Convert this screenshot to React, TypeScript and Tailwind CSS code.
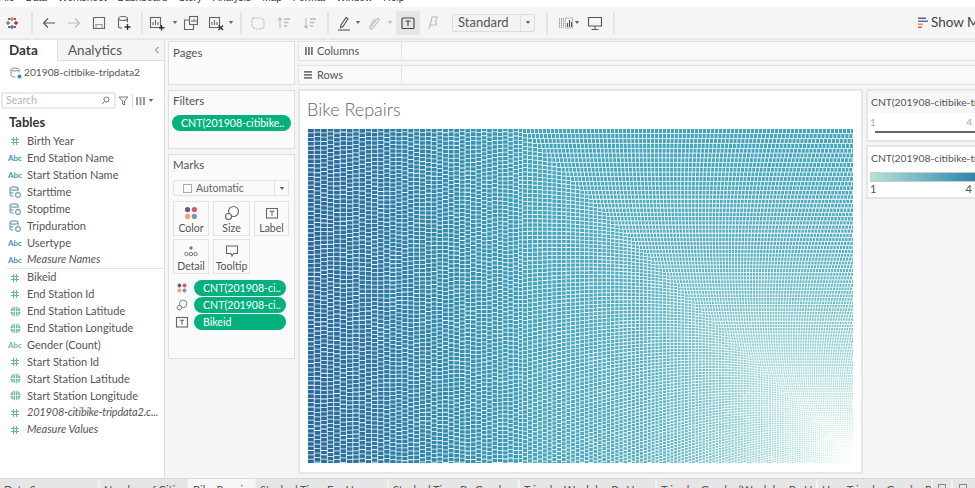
import React, { useMemo } from "react";

type Ic = { children: React.ReactNode; w?: number; h?: number };
const S = ({ children, w = 16, h = 16 }: Ic) => (
  <svg width={w} height={h} viewBox={`0 0 ${w} ${h}`} fill="none" stroke="#666" strokeWidth="1.1">
    {children}
  </svg>
);

const Caret = ({ cls = "" }: { cls?: string }) => (
  <div className={`w-[6px] h-[3px] shrink-0 flex justify-center ${cls}`}>
    <svg width="6" height="3" viewBox="0 0 6 3"><path d="M0.8 0h4.4L3 3z" fill="#666" /></svg>
  </div>
);
const Sep = ({ cls }: { cls: string }) => <div className={`w-[2px] h-[22px] bg-[#e4e4e4] shrink-0 ${cls}`} />;
const Slot = ({ cls, children }: { cls: string; children: React.ReactNode }) => (
  <div className={`h-6 flex items-center justify-center shrink-0 ${cls}`}>{children}</div>
);

const Logo = () => (
  <svg width="14" height="14" viewBox="0 0 14 14" strokeWidth="1.3">
    <path d="M7 1v4M5 3h4" stroke="#e8762d" />
    <path d="M7 9v4M5 11h4" stroke="#5b6591" />
    <path d="M1 7h4M3 5v4" stroke="#59879b" />
    <path d="M9 7h4M11 5v4" stroke="#c72035" />
    <path d="M3 3h2M4 2v2M9 3h2M10 2v2M3 11h2M4 10v2M9 11h2M10 10v2" stroke="#1f447e" strokeWidth="1" />
  </svg>
);
const ChartBox = ({ plus, x }: { plus?: boolean; x?: boolean }) => (
  <S>
    <rect x="1.5" y="2.5" width="10" height="10" />
    <path d="M4 10V7M6.5 10V5M9 10V7" />
    {plus && <path d="M12.5 10v5.5M10 12.8h5.5" stroke="#333" strokeWidth="1.4" />}
    {x && <path d="M10.5 10.5l4.5 4.5M15 10.5l-4.5 4.5" stroke="#333" strokeWidth="1.4" />}
  </S>
);
const SortIcon = ({ down }: { down?: boolean }) => (
  <S>
    <path d={down ? "M4 3v10M2 10.5L4 13l2-2.5" : "M4 13V3M2 5.5L4 3l2 2.5"} stroke="#bbb" />
    <path d="M8 4h6M8 7.5h4.5M8 11h3" stroke="#bbb" strokeWidth="1.6" />
  </S>
);
const Dots = () => (
  <svg width="14" height="14" viewBox="0 0 14 14">
    <circle cx="3.6" cy="3.6" r="2.6" fill="#6d5a8c" />
    <circle cx="10.4" cy="3.6" r="2.6" fill="#d8566c" />
    <circle cx="3.6" cy="10.4" r="2.6" fill="#f2a273" />
    <circle cx="10.4" cy="10.4" r="2.6" fill="#7e93b5" />
  </svg>
);
const SizeIc = () => (
  <S>
    <circle cx="9.5" cy="6.5" r="5" />
    <circle cx="4.5" cy="11.5" r="3" fill="#fafafa" />
  </S>
);
const TBox = () => (
  <S w={14} h={14}>
    <rect x="1.5" y="2.5" width="11" height="9.5" />
    <path d="M4.8 5.2h4.4M7 5.2v4.6" />
  </S>
);

const Hash = ({ c = "#6bb89c" }: { c?: string }) => (
  <svg width="10" height="10" viewBox="0 0 10 10" stroke={c} strokeWidth="1.2" fill="none">
    <path d="M3.5 1v8M6.5 1v8M1 3.5h8M1 6.5h8" />
  </svg>
);
const Globe = () => (
  <svg width="11" height="11" viewBox="0 0 11 11">
    <circle cx="5.5" cy="5.5" r="5" fill="#72bd9f" />
    <path d="M0.5 5.5h10M5.5 .5v10" stroke="#fff" strokeWidth=".8" />
    <ellipse cx="5.5" cy="5.5" rx="2.4" ry="5" fill="none" stroke="#fff" strokeWidth=".7" />
  </svg>
);
const Db = () => (
  <svg width="12" height="12" viewBox="0 0 12 12" fill="none" stroke="#6e9cb3" strokeWidth="1.1">
    <ellipse cx="5" cy="2.5" rx="4" ry="1.6" />
    <path d="M1 2.5v6c0 1 1.6 1.6 3.4 1.6M9 2.5v3M1 5.5c0 1 1.6 1.6 3.4 1.6" />
    <circle cx="9" cy="9" r="2.4" fill="#fff" />
  </svg>
);
const Abc = ({ c = "#4f8fa8" }: { c?: string }) => (
  <span className="text-[8px] leading-none font-bold" style={{ color: c }}>Abc</span>
);

const fields: { t: string; i: "h" | "a" | "d" | "g" | "ag"; it?: boolean }[] = [
  { t: "Birth Year", i: "h" },
  { t: "End Station Name", i: "a" },
  { t: "Start Station Name", i: "a" },
  { t: "Starttime", i: "d" },
  { t: "Stoptime", i: "d" },
  { t: "Tripduration", i: "d" },
  { t: "Usertype", i: "a" },
  { t: "Measure Names", i: "a", it: true },
];
const fields2: { t: string; i: "h" | "a" | "d" | "g" | "ag"; it?: boolean }[] = [
  { t: "Bikeid", i: "h" },
  { t: "End Station Id", i: "h" },
  { t: "End Station Latitude", i: "g" },
  { t: "End Station Longitude", i: "g" },
  { t: "Gender (Count)", i: "ag" },
  { t: "Start Station Id", i: "h" },
  { t: "Start Station Latitude", i: "g" },
  { t: "Start Station Longitude", i: "g" },
  { t: "201908-citibike-tripdata2.c...", i: "h", it: true },
  { t: "Measure Values", i: "h", it: true },
];

const Field = ({ t, i, it }: { t: string; i: string; it?: boolean }) => (
  <div className="h-[16.9px] flex items-center shrink-0">
    <div className="w-[27px] shrink-0 flex justify-center pl-[3px]">
      {i === "h" && <Hash />}
      {i === "a" && <Abc />}
      {i === "ag" && <Abc c="#6bb89c" />}
      {i === "d" && <Db />}
      {i === "g" && <Globe />}
    </div>
    <span className={`text-[11px] text-[#555] whitespace-nowrap ${it ? "italic" : ""} ${t.startsWith("2") ? "tracking-[-0.2px]" : ""}`}>{t}</span>
  </div>
);

const Pill = ({ children, cls = "" }: { children: React.ReactNode; cls?: string }) => (
  <div className={`h-[16px] rounded-full bg-[#05b07f] text-white text-[10.6px] leading-[16px] pl-[9px] whitespace-nowrap overflow-hidden ${cls}`}>
    {children}
  </div>
);
const MarkBtn = ({ label, cls, children }: { label: string; cls: string; children: React.ReactNode }) => (
  <div className={`h-[35px] border border-[#e2e2e2] bg-[#fafafa] flex flex-col items-center pt-[3px] shrink-0 ${cls}`}>
    <div className="h-[16px] flex items-center">{children}</div>
    <span className="text-[10.5px] leading-[13px] text-[#555] mt-[1px]">{label}</span>
  </div>
);

function hex(c: string) {
  return [1, 3, 5].map((i) => parseInt(c.slice(i, i + 2), 16));
}
function ramp(stops: [number, string][], t: number) {
  for (let i = 0; i < stops.length - 1; i++) {
    const [a, ca] = stops[i];
    const [b, cb] = stops[i + 1];
    if (t <= b) {
      const p = Math.max(0, (t - a) / (b - a));
      const A = hex(ca), B = hex(cb);
      return `rgb(${A.map((v, k) => Math.round(v + (B[k] - v) * p)).join(",")})`;
    }
  }
  return stops[stops.length - 1][1];
}

const TW = 545, TH = 334, SPLIT = 215;
function treemap() {
  const out: { d: string; f: string }[] = [];
  const gap = 0.8;
  const n = (v: number) => v.toFixed(2);
  const col = (x: number, y0: number, w: number, cell: number, f: string) => {
    let d = "";
    for (let y = y0; y < TH - 0.2; y += cell) {
      const top = Math.max(y, 0);
      const h = Math.min(y + cell - gap, TH) - top;
      if (h <= 0) continue;
      d += `M${n(x)} ${n(top)}h${n(w - gap)}v${n(h)}h${n(gap - w)}z`;
    }
    out.push({ d, f });
  };
  const row = (x0: number, y: number, h: number, cell: number, f: string) => {
    let d = "";
    for (let x = x0; x < TW - 0.2; x += cell) {
      const w = Math.min(cell - gap, TW - x);
      if (w <= 0) continue;
      d += `M${n(x)} ${n(y)}h${n(w)}v${n(h - gap)}h${n(-w)}z`;
    }
    out.push({ d, f });
  };
  let x = 0, k = 0;
  const left: [number, string][] = [[0, "#2a6a98"], [0.35, "#2d7ca6"], [0.7, "#3490b0"], [1, "#409fb9"]];
  while (x < SPLIT - 1) {
    const p = x / SPLIT;
    const w = Math.min(6.6 - 1.5 * p, SPLIT - x);
    const h = 4.35 + 0.18 * Math.sin(k * 1.7) - 0.2 * p;
    col(x, k % 2 ? -h * 0.35 + 0.5 : 0, w, h, ramp(left, p));
    x += w;
    k++;
  }
  const right: [number, string][] = [[0, "#45a4bc"], [0.35, "#57b0c2"], [0.6, "#7fc6cc"], [0.85, "#b6e1dc"], [1, "#eef8f6"]];
  let rx = SPLIT, ry = 0;
  while (rx < TW - 0.5 && ry < TH - 0.5) {
    const r = (TW - rx) / (TW - SPLIT);
    const s = 1.5 + 3.5 * Math.pow(r, 0.8);
    const f = ramp(right, 1 - r);
    row(rx, ry, s, s * 0.8, f);
    ry += s;
    col(rx, ry, s, s * 0.85, f);
    rx += s;
  }
  return out;
}

const Treemap = () => {
  const cells = useMemo(treemap, []);
  return (
    <svg width={TW} height={TH} viewBox={`0 0 ${TW} ${TH}`} className="block ml-[8px] mt-[8px] blur-[0.35px]">
      {cells.map((c, i) => (
        <path key={i} d={c.d} fill={c.f} />
      ))}
    </svg>
  );
};

const menu = ["File", "Data", "Worksheet", "Dashboard", "Story", "Analysis", "Map", "Format", "Window", "Help"];
const tabs: [string, string][] = [
  ["Data Source", "w-[100px]"],
  ["Number of Citi..", "w-[89px]"],
  ["Bike Repairs", "w-[67px] bg-[#f7f7f7]"],
  ["Stacked Time For Hours", "w-[133px]"],
  ["Stacked Time By Gender", "w-[131px]"],
  ["Trips by Weekday By Hour", "w-[137px]"],
  ["Trips by Gender/Weekday By Hour", "w-[161px]"],
  ["User Trips by Gender B", "w-[115px]"],
];

export default function App() {
  return (
    <div className="w-[975px] h-[488px] overflow-hidden flex flex-col bg-[#f5f5f5] font-['Lato',sans-serif] text-[#555]">
      {/* menu bar */}
      <div className="h-[7px] bg-white overflow-hidden shrink-0">
        <div className="flex h-[14px] -mt-[9px] -ml-[2px] font-['Liberation_Sans',sans-serif] text-[10.2px] leading-[14px] text-[#333] gap-[11px] whitespace-nowrap">
          {menu.map((m) => (
            <span key={m}>{m}</span>
          ))}
        </div>
      </div>

      {/* toolbar */}
      <div className="h-[33px] shrink-0 flex items-center whitespace-nowrap border-b-2 border-[#e8e8e8]">
        <Slot cls="w-6"><Logo /></Slot>
        <Sep cls="ml-[7px]" />
        <Slot cls="w-[25px] ml-[3px]">
          <S><path d="M14 8H2.5M7 3.5L2.5 8 7 12.5" stroke="#555" /></S>
        </Slot>
        <Slot cls="w-[25px]">
          <S><path d="M2 8h11.5M9 3.5L13.5 8 9 12.5" stroke="#bbb" /></S>
        </Slot>
        <Slot cls="w-[25px]">
          <S><path d="M2.5 2.5h11v11h-11z" /><path d="M5 13.5v-4h6v4" stroke="#999" /></S>
        </Slot>
        <Slot cls="w-[25px]">
          <S><ellipse cx="7" cy="3.5" rx="4.5" ry="2" /><path d="M2.5 3.5v8c0 1 1.5 1.5 3.5 1.5M11.5 3.5v4" /><path d="M11.5 9v6M8.5 12h6" stroke="#333" strokeWidth="1.4" /></S>
        </Slot>
        <Sep cls="ml-[5px]" />
        <Slot cls="w-6 ml-[2px]"><ChartBox plus /></Slot>
        <Caret cls="ml-[3px]" />
        <Slot cls="w-6 ml-[1px]">
          <S><rect x="6.5" y="1.5" width="8" height="8" /><path d="M6 5H1.5v9.5h9V10" /><path d="M9 7V5M11 7V4M13 7V5" /></S>
        </Slot>
        <Slot cls="w-6 ml-[1px]"><ChartBox x /></Slot>
        <Caret />
        <Sep cls="ml-[6px]" />
        <Slot cls="w-6 ml-[4px]">
          <S><path d="M3 3h9l2 3v6l-3 2H5l-3-3V5z" stroke="#bbb" strokeDasharray="2.2 1" /></S>
        </Slot>
        <Slot cls="w-6 ml-[2px]"><SortIcon /></Slot>
        <Slot cls="w-6 ml-[2px]"><SortIcon down /></Slot>
        <Sep cls="ml-[5px]" />
        <Slot cls="w-6 ml-[3px]">
          <S><path d="M5 10L10 2.5l2 1.2L7 11.5l-2.5 1z" stroke="#555" /><path d="M2 15h12" stroke="#555" /></S>
        </Slot>
        <Caret cls="-ml-[1px]" />
        <Slot cls="w-6 ml-[1px]">
          <S><path d="M5 12L11 4c1-1.5 3 0 2 1.5L7 13c-1.500 2-4.500 0-3-2l5-7" stroke="#bbb" /></S>
        </Slot>
        <Caret cls="ml-[1px] opacity-40" />
        <div className="w-6 h-6 ml-[3px] bg-[#e6e6e6] flex items-center justify-center shrink-0">
          <S><rect x="2" y="3" width="12" height="10.500" rx="1" stroke="#444" /><path d="M5.500 6h5M8 6v5" stroke="#444" /></S>
        </div>
        <Slot cls="w-6">
          <S><path d="M8 2h5l-1.500 5 1 3H6l1-3zM7 10l-2.500 4" stroke="#bbb" /></S>
        </Slot>
        <div className="ml-[8px] w-[83px] h-[18px] border border-[#ddd] rounded-[2px] bg-[#f3f3f3] flex items-center shrink-0">
          <span className="flex-1 pl-[5px] text-[13px] text-[#555] leading-none">Standard</span>
          <div className="w-[14px] h-full border-l border-[#ddd] flex items-center justify-center"><Caret /></div>
        </div>
        <Sep cls="ml-[11px]" />
        <Slot cls="w-6 ml-[6px]">
          <S><path d="M1.500 3v10M3.500 3v10M5.500 3v10" stroke="#999" strokeDasharray="1.500 .7" /><path d="M7.500 3h7v10h-7z" stroke="#bbb" /><path d="M9.500 12V8M11.500 12V5M13.500 12V7" stroke="#555" /></S>
        </Slot>
        <Caret cls="-ml-[4px]" />
        <Slot cls="w-6 ml-[3px]">
          <S><path d="M1.500 2.500h13v8.500h-13zM8 11v3.500M4.500 14.500h7" stroke="#555" /></S>
        </Slot>
        <Sep cls="ml-[6px]" />
        <div className="ml-[303px] flex items-center shrink-0">
          <svg width="10" height="12" viewBox="0 0 10 12" className="shrink-0">
            <path d="M0 .5h8v1.500H0z" fill="#5b5a8e" />
            <path d="M0 3.500h10V5H0z" fill="#4e79a7" />
            <path d="M0 6.500h5V8H0z" fill="#f28e2b" />
            <path d="M0 9.500h4V11H0z" fill="#e15759" />
          </svg>
          <span className="ml-[3px] text-[13.5px] text-[#444] leading-none">Show Me</span>
        </div>
      </div>

      {/* body */}
      <div className="flex-1 min-h-0 flex">
        {/* data pane */}
        <div className="w-[165px] shrink-0 bg-white border-r border-[#e0e0e0] flex flex-col">
          <div className="h-[21px] flex shrink-0">
            <div className="w-[57px] pl-[9px] text-[13.5px] leading-[21px] font-bold text-[#333]">Data</div>
            <div className="flex-1 flex items-center bg-[#f5f5f5] border-l border-b border-[#dedede]">
              <span className="pl-[10px] pt-[1px] text-[13.5px] text-[#555] flex-1 leading-none">Analytics</span>
              <svg width="6" height="8" viewBox="0 0 6 8" className="mr-[4px]" fill="none" stroke="#666"><path d="M4.500 1L1.500 4l3 3" /></svg>
            </div>
          </div>
          <div className="h-[23px] flex items-center pl-[10px] shrink-0">
            <svg width="12" height="12" viewBox="0 0 12 12" fill="none" stroke="#888"><ellipse cx="5" cy="2.500" rx="4" ry="1.500" /><path d="M1 2.500v6c0 1 2 1.500 4 1.500M9 2.500v3" /><circle cx="9.500" cy="9.500" r="2" fill="#3a8fb0" stroke="none" /></svg>
            <span className="ml-[2px] text-[10.2px] text-[#555] whitespace-nowrap">201908-citibike-tripdata2</span>
          </div>
          <div className="h-[17px] mt-[8px] flex items-center shrink-0">
            <div className="ml-[1px] w-[115px] h-[17px] border-2 border-[#eaeaea] rounded-[2px] flex items-center">
              <span className="flex-1 pl-[3px] text-[10.500px] text-[#b5b5b5] leading-none">Search</span>
              <svg width="9" height="9" viewBox="0 0 9 9" className="mr-[4px]" fill="none" stroke="#777"><circle cx="5.500" cy="3.500" r="2.500" /><path d="M3.500 5.500L1 8" /></svg>
            </div>
            <svg width="11" height="10" viewBox="0 0 11 10" className="ml-[2px]" fill="none" stroke="#777"><path d="M1 1h9L6.500 5v4l-2-1V5z" /></svg>
            <div className="w-px h-[14px] bg-[#ddd] ml-[3px]" />
            <svg width="9" height="8" viewBox="0 0 9 8" className="ml-[3px]"><path d="M0 0h2v8H0zM3.500 0h2v8h-2zM7 0h2v8H7z" fill="#999" /></svg>
            <Caret cls="ml-[3px]" />
          </div>
          <div className="h-[22px] mt-[2px] pl-[9px] text-[13px] leading-[22px] font-bold text-[#333] shrink-0">Tables</div>
          <div className="flex flex-col">
            {fields.map((f) => <Field key={f.t} {...f} />)}
          </div>
          <div className="h-px bg-[#e6e6e6] ml-[6px] shrink-0" />
          <div className="flex flex-col">
            {fields2.map((f) => <Field key={f.t} {...f} />)}
          </div>
        </div>

        {/* shelves column */}
        <div className="w-[133px] shrink-0 flex flex-col pl-[3px] pr-[3px] pt-[1px] gap-[5px]">
          <div className="h-[44px] bg-[#fafafa] border border-[#e0e0e0] pl-[4px] pt-[2px] text-[11.5px] text-[#555]">Pages</div>
          <div className="h-[59px] bg-[#fafafa] border border-[#e0e0e0] px-[3px] pt-[1px]">
            <div className="pl-[1px] text-[11.5px] leading-[17px] text-[#555] mb-[6px]">Filters</div>
            <Pill cls="w-[119px]">CNT(201908-citibike..</Pill>
          </div>
          <div className="h-[205px] bg-[#fafafa] border border-[#e0e0e0] px-[4px] pt-[1px]">
            <div className="text-[11.5px] leading-[17px] text-[#555]">Marks</div>
            <div className="mt-[7px] h-[16px] w-[116px] border border-[#e2e2e2] rounded-[2px] flex items-center">
              <div className="w-[9px] h-[9px] border border-[#aaa] ml-[9px]" />
              <span className="ml-[4px] flex-1 text-[10.5px] leading-none text-[#666]">Automatic</span>
              <div className="w-[14px] h-full border-l border-[#e2e2e2] flex items-center justify-center"><Caret /></div>
            </div>
            <div className="flex gap-[4px] mt-[5px]">
              <MarkBtn label="Color" cls="w-[36px]"><Dots /></MarkBtn>
              <MarkBtn label="Size" cls="w-[37px]"><SizeIc /></MarkBtn>
              <MarkBtn label="Label" cls="w-[35px]"><TBox /></MarkBtn>
            </div>
            <div className="flex gap-[4px] mt-[3px]">
              <MarkBtn label="Detail" cls="w-[36px]">
                <svg width="14" height="12" viewBox="0 0 14 12" fill="none" stroke="#777"><circle cx="7" cy="3" r="1.700" fill="#777" stroke="none" /><circle cx="2.500" cy="9" r="1.700" /><circle cx="7" cy="9" r="1.700" /><circle cx="11.500" cy="9" r="1.700" /></svg>
              </MarkBtn>
              <MarkBtn label="Tooltip" cls="w-[37px]">
                <S w={14} h={14}><path d="M1.500 2h11v7.500H8.500l-1.500 2.500-1-2.500H1.500z" /></S>
              </MarkBtn>
            </div>
            <div className="flex items-center mt-[6px]">
              <div className="w-[21px] flex justify-center shrink-0 pr-[3px]"><span className="block scale-75"><Dots /></span></div>
              <Pill cls="w-[92px]">CNT(201908-ci..</Pill>
            </div>
            <div className="flex items-center mt-[1px]">
              <div className="w-[21px] flex justify-center shrink-0 pr-[3px]"><span className="block scale-75"><SizeIc /></span></div>
              <Pill cls="w-[92px]">CNT(201908-ci..</Pill>
            </div>
            <div className="flex items-center mt-[1px]">
              <div className="w-[21px] flex justify-center shrink-0 pr-[3px]"><TBox /></div>
              <Pill cls="w-[92px]">Bikeid</Pill>
            </div>
          </div>
        </div>

        {/* work area */}
        <div className="flex-1 min-w-0 flex flex-col pt-[1px]">
          <div className="h-[20px] flex bg-[#f9f9f9] border-y border-[#e4e4e4] shrink-0">
            <div className="w-[104px] border-r border-[#e4e4e4] flex items-center pl-[6px] border-l">
              <svg width="8" height="8" viewBox="0 0 8 8"><path d="M0 0h1.800v8H0zM3 0h1.800v8H3zM6 0h1.800v8H6z" fill="#777" /></svg>
              <span className="ml-[4px] text-[11px] text-[#555]">Columns</span>
            </div>
          </div>
          <div className="h-[20px] mt-[4px] flex bg-[#f9f9f9] border-y border-[#e4e4e4] shrink-0">
            <div className="w-[104px] border-r border-[#e4e4e4] flex items-center pl-[5px] border-l">
              <svg width="8" height="8" viewBox="0 0 8 8"><path d="M0 0h8v1.800H0zM0 3h8v1.800H0zM0 6h8v1.800H0z" fill="#777" /></svg>
              <span className="ml-[5px] text-[11px] text-[#555]">Rows</span>
            </div>
          </div>
          <div className="flex mt-[4px]">
            <div className="w-[565px] h-[385px] bg-white border-2 border-[#e6e6e6] shrink-0">
              <div className="pl-[7px] pt-[6px] h-[30px] font-light text-[18px] leading-[24px] text-[#666]">Bike Repairs</div>
              <Treemap />
            </div>
            <div className="ml-[3px] w-[130px] shrink-0 flex flex-col gap-[3px]">
              <div className="h-[53px] bg-white border-2 border-[#e6e6e6] overflow-hidden">
                <div className="h-[22px] bg-[#f7f7f7] pl-[3px] text-[10.3px] leading-[22px] text-[#555] whitespace-nowrap">CNT(201908-citibike-trip</div>
                <div className="flex justify-between text-[10px] leading-[14px] text-[#aaa] pl-[2px] pr-[22px] mt-[2px]"><span>1</span><span>4</span></div>
                <div className="h-[2px] bg-[#666] ml-[7px] mt-[2px]" />
              </div>
              <div className="h-[54px] bg-white border-2 border-[#e6e6e6] overflow-hidden">
                <div className="h-[22px] pl-[3px] text-[10.3px] leading-[22px] text-[#555] whitespace-nowrap">CNT(201908-citibike-trip</div>
                <div className="h-[10px] ml-[2px] mt-[3px] border border-[#ccc] bg-gradient-to-r from-[#b5e2d6] via-[#3d97b6] via-[65%] to-[#2a6496] w-[135px]" />
                <div className="flex justify-between text-[11px] leading-[14px] text-[#555] pl-[2px] pr-[22px]"><span>1</span><span>4</span></div>
              </div>
            </div>
          </div>
        </div>
      </div>

      {/* sheet tabs */}
      <div className="h-[10px] shrink-0 bg-[#e6e6e6] border-t border-[#dadada] flex overflow-hidden">
        {tabs.map(([t, c]) => (
          <div key={t} className={`h-[20px] shrink-0 border-r-2 border-[#f2f2f2] pl-[4px] pt-[4px] text-[11px] leading-[14px] text-[#555] whitespace-nowrap overflow-hidden ${c}`}>
            {t}
          </div>
        ))}
        <div className="w-[20px] shrink-0 border-r-2 border-[#f2f2f2] flex justify-center pt-[5px]"><div className="w-[8px] h-[8px] border border-[#888]" /></div>
        <div className="w-[20px] shrink-0 flex justify-center pt-[5px]"><div className="w-[8px] h-[8px] border border-[#888]" /></div>
      </div>
    </div>
  );
}
